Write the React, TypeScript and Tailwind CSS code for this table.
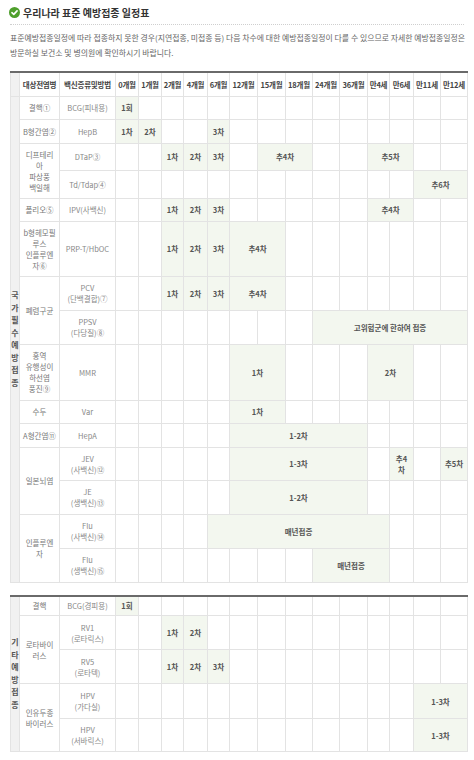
import React from 'react';

const MONTHS = ['0개월', '1개월', '2개월', '4개월', '6개월', '12개월', '15개월', '18개월', '24개월', '36개월', '만4세', '만6세', '만11세', '만12세'];
const WIDTHS = [23, 23, 22, 24, 22, 28, 28, 27, 27, 28, 22, 24, 27, 27];

type Seg = [number, number, string | string[]];
type Row = {
  h: number;
  c1?: { lines: string[]; rs: number };
  c2: string[];
  segs: Seg[];
};

const T1: Row[] = [
  { h: 23, c1: { lines: ['결핵①'], rs: 1 }, c2: ['BCG(피내용)'], segs: [[0, 1, '1회']] },
  { h: 24, c1: { lines: ['B형간염②'], rs: 1 }, c2: ['HepB'], segs: [[0, 1, '1차'], [1, 1, '2차'], [4, 1, '3차']] },
  { h: 27, c1: { lines: ['디프테리', '아', '파상풍', '백일해'], rs: 2 }, c2: ['DTaP③'], segs: [[2, 1, '1차'], [3, 1, '2차'], [4, 1, '3차'], [6, 2, '추4차'], [10, 2, '추5차']] },
  { h: 28, c2: ['Td/Tdap④'], segs: [[12, 2, '추6차']] },
  { h: 23, c1: { lines: ['폴리오⑤'], rs: 1 }, c2: ['IPV(사백신)'], segs: [[2, 1, '1차'], [3, 1, '2차'], [4, 1, '3차'], [10, 2, '추4차']] },
  { h: 55, c1: { lines: ['b형헤모필', '루스', '인플루엔', '자⑥'], rs: 1 }, c2: ['PRP-T/HbOC'], segs: [[2, 1, '1차'], [3, 1, '2차'], [4, 1, '3차'], [5, 2, '추4차']] },
  { h: 34, c1: { lines: ['폐렴구균'], rs: 2 }, c2: ['PCV', '(단백결합)⑦'], segs: [[2, 1, '1차'], [3, 1, '2차'], [4, 1, '3차'], [5, 2, '추4차']] },
  { h: 34, c2: ['PPSV', '(다당질)⑧'], segs: [[8, 6, '고위험군에 한하여 접종']] },
  { h: 56, c1: { lines: ['홍역', '유행성이', '하선염', '풍진⑨'], rs: 1 }, c2: ['MMR'], segs: [[5, 2, '1차'], [10, 2, '2차']] },
  { h: 23, c1: { lines: ['수두'], rs: 1 }, c2: ['Var'], segs: [[5, 2, '1차']] },
  { h: 24, c1: { lines: ['A형간염⑪'], rs: 1 }, c2: ['HepA'], segs: [[5, 5, '1-2차']] },
  { h: 33, c1: { lines: ['일본뇌염'], rs: 2 }, c2: ['JEV', '(사백신)⑫'], segs: [[5, 5, '1-3차'], [11, 1, ['추4', '차']], [13, 1, '추5차']] },
  { h: 34, c2: ['JE', '(생백신)⑬'], segs: [[5, 5, '1-2차']] },
  { h: 34, c1: { lines: ['인플루엔', '자'], rs: 2 }, c2: ['Flu', '(사백신)⑭'], segs: [[4, 7, '매년접종']] },
  { h: 34, c2: ['Flu', '(생백신)⑮'], segs: [[8, 3, '매년접종']] },
];

const T2: Row[] = [
  { h: 20, c1: { lines: ['결핵'], rs: 1 }, c2: ['BCG(경피용)'], segs: [[0, 1, '1회']] },
  { h: 34, c1: { lines: ['로타바이', '러스'], rs: 2 }, c2: ['RV1', '(로타릭스)'], segs: [[2, 1, '1차'], [3, 1, '2차']] },
  { h: 34, c2: ['RV5', '(로타텍)'], segs: [[2, 1, '1차'], [3, 1, '2차'], [4, 1, '3차']] },
  { h: 35, c1: { lines: ['인유두종', '바이러스'], rs: 2 }, c2: ['HPV', '(가다실)'], segs: [[12, 2, '1-3차']] },
  { h: 33, c2: ['HPV', '(서바릭스)'], segs: [[12, 2, '1-3차']] },
];

const cellBase = 'border border-[#e3e3e3] p-0 text-center align-middle';

function Lines({ lines }: { lines: string[] }) {
  return (
    <>
      {lines.map((l, i) => (
        <div key={i} className="whitespace-nowrap">
          {l}
        </div>
      ))}
    </>
  );
}

function MonthCells({ segs }: { segs: Seg[] }) {
  const cells: React.ReactNode[] = [];
  let i = 0;
  while (i < 14) {
    const s = segs.find((x) => x[0] === i);
    if (s) {
      const txt = Array.isArray(s[2]) ? s[2] : [s[2]];
      cells.push(
        <td
          key={i}
          colSpan={s[1]}
          className={`${cellBase} bg-[#f3f7ef] font-bold text-[#555] leading-[11px]`}
        >
          <Lines lines={txt} />
        </td>
      );
      i += s[1];
    } else {
      cells.push(<td key={i} className={cellBase} />);
      i++;
    }
  }
  return <>{cells}</>;
}

function Vertical({ text }: { text: string }) {
  return (
    <div className="flex flex-col items-center text-[8px] font-bold leading-[12.5px] text-[#555]">
      {text.split('').map((c, i) => (
        <span key={i}>{c}</span>
      ))}
    </div>
  );
}

function Schedule({ rows, label, header, className }: { rows: Row[]; label: string; header: boolean; className?: string }) {
  return (
    <table className={`table-fixed border-collapse w-[457px] border-t-2 border-t-[#6a6a6a] text-[7.5px] ${className ?? ''}`}>
      <colgroup>
        <col className="w-[9px]" />
        <col className="w-[40px]" />
        <col className="w-[56px]" />
        {WIDTHS.map((w, i) => (
          <col key={i} style={{ width: w }} />
        ))}
      </colgroup>
      <tbody>
        {header && (
          <tr className="h-[24px]">
            <th className={`${cellBase} bg-[#f1f1f1] border-t-2 border-t-[#6a6a6a]`} />
            <th className={`${cellBase} font-bold text-[#444] whitespace-nowrap tracking-[-0.2px] border-t-2 border-t-[#6a6a6a]`}>대상전염병</th>
            <th className={`${cellBase} font-bold text-[#444] whitespace-nowrap tracking-[-0.2px] border-t-2 border-t-[#6a6a6a]`}>백신종류및방법</th>
            {MONTHS.map((m) => (
              <th key={m} className={`${cellBase} font-bold text-[#444] whitespace-nowrap tracking-[-0.2px] border-t-2 border-t-[#6a6a6a]`}>
                {m}
              </th>
            ))}
          </tr>
        )}
        {rows.map((r, idx) => (
          <tr key={idx} style={{ height: r.h }}>
            {idx === 0 && (
              <td rowSpan={rows.length + (header ? 1 : 0)} className={`${cellBase} bg-[#f1f1f1] ${header ? '' : 'border-t-2 border-t-[#6a6a6a]'}`}>
                <Vertical text={label} />
              </td>
            )}
            {r.c1 && (
              <td rowSpan={r.c1.rs} className={`${cellBase} text-[#777] leading-[11px] ${!header && idx === 0 ? 'border-t-2 border-t-[#6a6a6a]' : ''}`}>
                <Lines lines={r.c1.lines} />
              </td>
            )}
            <td className={`${cellBase} text-[#888] leading-[11px] ${!header && idx === 0 ? 'border-t-2 border-t-[#6a6a6a]' : ''}`}>
              <Lines lines={r.c2} />
            </td>
            <MonthCells segs={r.segs} />
          </tr>
        ))}
      </tbody>
    </table>
  );
}

export default function App() {
  return (
    <div className="w-[474px] min-h-[760px] bg-white pt-[6px] font-['Noto_Sans_CJK_KR','Noto_Sans',sans-serif]">
      <div className="flex h-[13px] items-center gap-[3px] pl-[9px]">
        <svg width="11" height="11" viewBox="0 0 12 12">
          <circle cx="6" cy="6" r="6" fill="#4e9f2c" />
          <path d="M3.2 6.2 L5.2 8 L8.8 4.2" stroke="#fff" strokeWidth="1.8" fill="none" strokeLinecap="round" strokeLinejoin="round" />
        </svg>
        <span className="text-[10px] font-bold leading-none text-[#333]">우리나라 표준 예방접종 일정표</span>
      </div>
      <div className="mx-[10px] mt-[5px] border-t border-dotted border-[#cfcfcf]" />
      <div className="mt-[5px] px-[10px] text-[7.9px] leading-[15px] text-[#666]">
        <div className="whitespace-nowrap">
          표준예방접종일정에 따라 접종하지 못한 경우(지연접종, 미접종 등) 다음 차수에 대한 예방접종일정이 다를 수 있으므로 자세한 예방접종일정은
        </div>
        <div className="whitespace-nowrap">방문하실 보건소 및 병의원에 확인하시기 바랍니다.</div>
      </div>
      <div className="mt-[11px] pl-[10px]">
        <Schedule rows={T1} label="국가필수예방접종" header />
        <Schedule rows={T2} label="기타예방접종" header={false} className="mt-[12px]" />
      </div>
    </div>
  );
}
